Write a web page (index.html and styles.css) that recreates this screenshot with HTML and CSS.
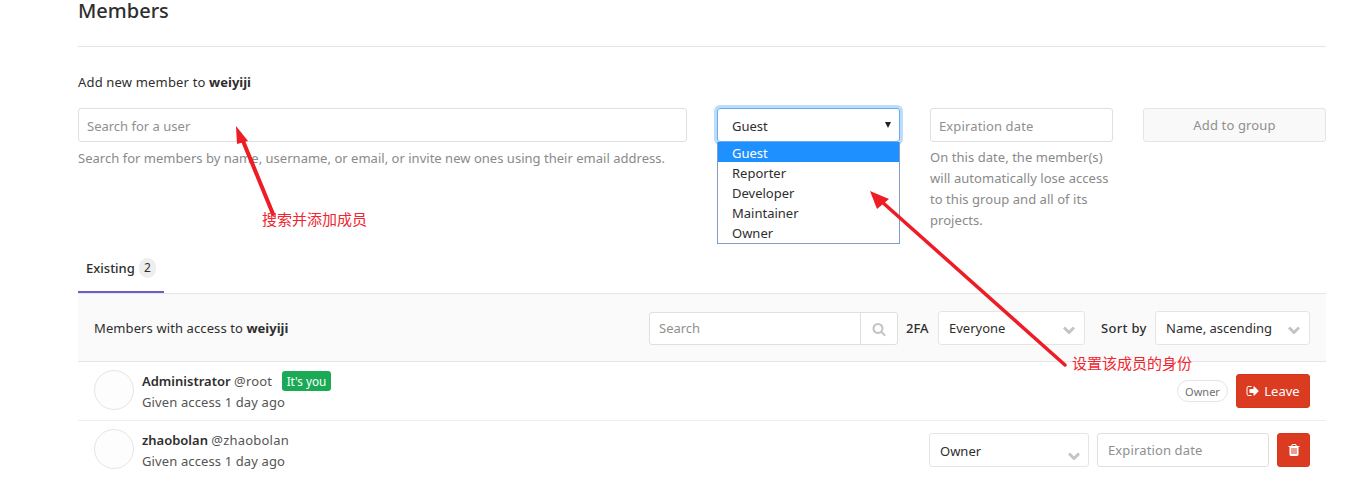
FILE: index.html
```html
<!DOCTYPE html>
<html lang="en">
<head>
  <meta charset="UTF-8">
  <title>Members</title>
  <link rel="stylesheet" href="styles.css">
</head>
<body>
  <div class="page">
    <h3 class="page-title">Members</h3>

    <p class="add-title">Add new member to <strong>weiyiji</strong></p>
    <div class="add-form">
      <div>
        <input class="input" type="text" placeholder="Search for a user">
        <p class="help">Search for members by name, username, or email, or invite new ones using their email address.</p>
      </div>
      <div class="role-col">
        <div class="role-select">Guest<span class="role-caret"></span></div>
        <ul class="role-menu">
          <li class="selected">Guest</li>
          <li>Reporter</li>
          <li>Developer</li>
          <li>Maintainer</li>
          <li>Owner</li>
        </ul>
      </div>
      <div>
        <input class="input input-date" type="text" placeholder="Expiration date">
        <p class="help help-date">On this date, the member(s) will automatically lose access to this group and all of its projects.</p>
      </div>
      <div>
        <button class="btn-add" type="button">Add to group</button>
      </div>
    </div>

    <div class="tabs">
      <a class="tab">Existing <span class="tab-count">2</span></a>
    </div>

    <div class="filter-bar">
      <div class="filter-title">Members with access to <strong>weiyiji</strong></div>
      <div class="filter-controls">
        <div class="search-box">
          <input class="search-input" type="text" placeholder="Search">
          <span class="search-btn">
            <svg viewBox="0 0 1792 1792" width="14" height="14"><path fill="#c4c4c4" d="M1216 832q0-185-131.500-316.500t-316.500-131.500-316.500 131.500-131.500 316.500 131.500 316.500 316.500 131.500 316.500-131.500 131.500-316.500zm512 832q0 52-38 90t-90 38q-54 0-90-38l-343-342q-179 124-399 124-143 0-273.500-55.500t-225-150-150-225-55.500-273.500 55.500-273.500 150-225 225-150 273.500-55.500 273.500 55.500 225 150 150 225 55.500 273.500q0 220-124 399l343 343q37 37 37 90z"/></svg>
          </span>
        </div>
        <label class="filter-label label-2fa">2FA</label>
        <div class="select select-2fa">Everyone
          <svg class="chevron" viewBox="0 0 12 8" width="12" height="8"><path d="M1 1.500l5 5 5-5" fill="none" stroke="#c4c4c4" stroke-width="3"/></svg>
        </div>
        <label class="filter-label label-sort">Sort by</label>
        <div class="select select-sort">Name, ascending
          <svg class="chevron" viewBox="0 0 12 8" width="12" height="8"><path d="M1 1.500l5 5 5-5" fill="none" stroke="#c4c4c4" stroke-width="3"/></svg>
        </div>
      </div>
    </div>

    <div class="member">
      <div class="avatar"></div>
      <div class="member-info">
        <div><span class="member-name">Administrator</span> <span class="member-user">@root</span> <span class="badge-you">It's you</span></div>
        <div class="member-access">Given access 1 day ago</div>
      </div>
      <div class="member-actions">
        <span class="badge-role">Owner</span>
        <button class="btn-danger btn-leave" type="button">
          <svg viewBox="0 0 1792 1792" width="14" height="14"><path fill="#fff" d="M704 1440q0 4 1 20t.5 26.500-3 23.500-10 19.500-20.500 6.500h-320q-119 0-203.500-84.500t-84.500-203.500v-704q0-119 84.500-203.500t203.500-84.500h320q13 0 22.500 9.500t9.500 22.500q0 4 1 20t.5 26.500-3 23.500-10 19.500-20.500 6.500h-320q-66 0-113 47t-47 113v704q0 66 47 113t113 47h312l11.500 1 11.500 3 8 5.500 7 9 2 13.500zm928-544q0 26-19 45l-544 544q-19 19-45 19t-45-19-19-45v-288h-448q-26 0-45-19t-19-45v-384q0-26 19-45t45-19h448v-288q0-26 19-45t45-19 45 19l544 544q19 19 19 45z"/></svg>
          Leave
        </button>
      </div>
    </div>

    <div class="member member-last">
      <div class="avatar"></div>
      <div class="member-info">
        <div><span class="member-name">zhaobolan</span> <span class="member-user">@zhaobolan</span></div>
        <div class="member-access">Given access 1 day ago</div>
      </div>
      <div class="member-actions">
        <div class="select select-owner">Owner
          <svg class="chevron chevron-low" viewBox="0 0 12 8" width="12" height="8"><path d="M1 1.500l5 5 5-5" fill="none" stroke="#c4c4c4" stroke-width="3"/></svg>
        </div>
        <input class="input input-date input-member-date" type="text" placeholder="Expiration date">
        <button class="btn-danger btn-trash" type="button">
          <svg viewBox="0 0 1792 1792" width="14" height="14"><path fill="#fff" d="M704 1376v-704q0-14-9-23t-23-9h-64q-14 0-23 9t-9 23v704q0 14 9 23t23 9h64q14 0 23-9t9-23zm256 0v-704q0-14-9-23t-23-9h-64q-14 0-23 9t-9 23v704q0 14 9 23t23 9h64q14 0 23-9t9-23zm256 0v-704q0-14-9-23t-23-9h-64q-14 0-23 9t-9 23v704q0 14 9 23t23 9h64q14 0 23-9t9-23zm-544-992h448l-48-117q-7-9-17-11h-317q-10 2-17 11zm928 32v64q0 14-9 23t-23 9h-96v948q0 83-47 143.500t-113 60.500h-832q-66 0-113-58.500t-47-141.500v-952h-96q-14 0-23-9t-9-23v-64q0-14 9-23t23-9h309l70-167q15-37 54-63t79-26h320q40 0 79 26t54 63l70 167h309q14 0 23 9t9 23z"/></svg>
        </button>
      </div>
    </div>
  </div>

  <!-- red screenshot annotations -->
  <svg class="arrows" width="1371" height="500" viewBox="0 0 1371 500">
    <path d="M273 214L243 141" stroke="#ee1c25" stroke-width="4" stroke-linecap="round" fill="none"/>
    <path d="M236 126L248 141L237 144z" fill="#ee1c25"/>
    <path d="M1065 365L881 201" stroke="#ee1c25" stroke-width="3.500" stroke-linecap="round" fill="none"/>
    <path d="M870 191L889 199L877 209z" fill="#ee1c25"/>
  </svg>
  <div class="note note-search">搜索并添加成员</div>
  <div class="note note-role">设置该成员的身份</div>
</body>
</html>
```

FILE: styles.css
```css
* {
  box-sizing: border-box;
}

html, body {
  height: 500px;
  overflow: hidden;
}

body {
  margin: 0;
  background-color: #fff;
  color: #2e2e2e;
  font-family: "Noto Sans", "Open Sans", sans-serif;
  font-size: 13px;
}

.page {
  width: 1248px;
  margin-left: 78px;
}

.page-title {
  margin: 0;
  height: 47px;
  border-bottom: 1px solid #e5e5e5;
  font-size: 20px;
  font-weight: 500;
  line-height: 22px;
  color: #2e2e2e;
}

.add-title {
  margin: 26px 0 16px;
  line-height: 19px;
  letter-spacing: .17px;
}

.add-title strong, .filter-title strong {
  letter-spacing: 0;
}

.add-form {
  display: grid;
  grid-template-columns: 609px 183px 183px 183px;
  column-gap: 30px;
  height: 152px;
}

.input {
  display: block;
  width: 100%;
  height: 34px;
  padding: 1px 8px 0;
  border: 1px solid #dfdfdf;
  border-radius: 3px;
  background: #fff;
  font-family: inherit;
  font-size: 13px;
  color: #2e2e2e;
}

.input-date {
  letter-spacing: .13px;
}

.input::placeholder, .search-input::placeholder {
  color: #8f8f8f;
  opacity: 1;
}

.help {
  margin: 6px 0 0;
  color: #8a8a8a;
  line-height: 21px;
  font-size: 13px;
  letter-spacing: .02px;
}

.help-date {
  margin-top: 5px;
  letter-spacing: .05px;
}

.role-col {
  position: relative;
}

.role-select {
  position: relative;
  height: 34px;
  padding: 0 14px;
  border: 1px solid #6aa9ef;
  border-radius: 3px;
  box-shadow: 0 0 0 3px #bcdcfb;
  line-height: 35px;
  color: #2e2e2e;
}

.role-caret {
  position: absolute;
  top: 13px;
  right: 8px;
  border-left: 3px solid transparent;
  border-right: 3px solid transparent;
  border-top: 6px solid #222;
}

.role-menu {
  position: absolute;
  top: 34px;
  left: 0;
  width: 183px;
  height: 102px;
  margin: 0;
  padding: 0;
  list-style: none;
  background: #fff;
  border: 1px solid #7f9bd0;
  border-top: 0;
  z-index: 2;
}

.role-menu li {
  height: 20px;
  padding: 1px 0 0 14px;
  line-height: 20px;
  color: #2e2e2e;
}

.role-menu li.selected {
  background-color: #1e90ff;
  color: #fff;
}

.btn-add {
  width: 100%;
  height: 34px;
  border: 1px solid #e5e5e5;
  border-radius: 3px;
  background: #f9f9f9;
  color: #8f8f8f;
  font-family: inherit;
  font-size: 13px;
  letter-spacing: .15px;
}

.tabs {
  display: flex;
  height: 33px;
}

.tab {
  display: flex;
  align-items: center;
  gap: 4px;
  width: 86px;
  height: 33px;
  padding: 0 8px 15px;
  border-bottom: 2px solid #6b5fc7;
  color: #2e2e2e;
  font-weight: 500;
}

.tab-count {
  width: 17px;
  height: 20px;
  border-radius: 10px;
  background: #eee;
  text-align: center;
  line-height: 20px;
  font-size: 12px;
  font-weight: 400;
  flex-shrink: 0;
}

.filter-bar {
  display: flex;
  justify-content: space-between;
  align-items: center;
  height: 69px;
  padding: 1px 16px 0;
  background: #fafafa;
  border-top: 1px solid #e5e5e5;
  border-bottom: 1px solid #e5e5e5;
}

.filter-title {
  letter-spacing: .1px;
}

.filter-controls {
  display: flex;
  align-items: center;
}

.search-box {
  display: flex;
  width: 249px;
  height: 33px;
  border: 1px solid #dfdfdf;
  border-radius: 3px;
  background: #fff;
}

.search-input {
  flex: 1;
  min-width: 0;
  padding: 0 9px;
  border: 0;
  border-right: 1px solid #dfdfdf;
  border-radius: 3px 0 0 3px;
  background: transparent;
  font-family: inherit;
  font-size: 13px;
}

.search-btn {
  display: flex;
  align-items: center;
  justify-content: center;
  width: 36px;
  padding-top: 2px;
}

.filter-label {
  font-weight: 500;
  color: #2e2e2e;
}

.label-2fa {
  width: 24px;
  margin: 0 8px;
}

.label-sort {
  width: 46px;
  margin: 0 8px 0 16px;
  letter-spacing: .3px;
  white-space: nowrap;
}

.select {
  position: relative;
  height: 34px;
  padding: 0 10px;
  border: 1px solid #e5e5e5;
  border-radius: 3px;
  background: #fff;
  line-height: 33px;
  color: #2e2e2e;
}

.select-2fa {
  width: 147px;
}

.select-sort {
  width: 155px;
}

.select-owner {
  width: 160px;
  line-height: 35px;
}

.chevron {
  position: absolute;
  top: 14px;
  right: 9px;
}

.chevron-low {
  top: 18px;
  right: 8px;
}

.member {
  display: flex;
  align-items: center;
  height: 59px;
  padding: 0 16px;
  border-bottom: 1px solid #eee;
}

.member-last {
  height: 57px;
  border-bottom: 0;
}

.avatar {
  width: 40px;
  height: 40px;
  margin: -2px 8px 0 0;
  border: 1px solid #e5e5e5;
  border-radius: 50%;
  background: #fdfdfd;
}

.member-info {
  flex: 1;
  padding-top: 2px;
  line-height: 21px;
}

.member-name {
  font-weight: 600;
  color: #2e2e2e;
}

.member-user {
  color: #555;
  letter-spacing: .2px;
}

.member-access {
  color: #555;
  letter-spacing: .12px;
}

.badge-you {
  display: inline-block;
  height: 20px;
  margin-left: 6px;
  padding: 0 5px;
  border-radius: 3px;
  background: #1aaa55;
  color: #fff;
  font-size: 11.700px;
  line-height: 20px;
}

.member-actions {
  display: flex;
  align-items: center;
  gap: 8px;
}

.badge-role {
  display: inline-block;
  width: 51px;
  height: 22px;
  border: 1px solid #e5e5e5;
  border-radius: 11px;
  text-align: center;
  color: #707070;
  font-size: 11px;
  line-height: 21px;
}

.btn-danger {
  display: flex;
  align-items: center;
  justify-content: center;
  height: 34px;
  border: 1px solid #d5361d;
  border-radius: 3px;
  background: #db3b21;
  color: #fff;
  font-family: inherit;
  font-size: 13px;
}

.btn-leave {
  gap: 4px;
  width: 74px;
  padding: 0;
}

.btn-trash {
  width: 33px;
  padding: 0;
}

.input-member-date {
  width: 172px;
  padding: 0 10px;
}

.arrows {
  position: absolute;
  top: 0;
  left: 0;
  z-index: 3;
  pointer-events: none;
}

.note {
  position: absolute;
  z-index: 4;
  color: #f0252f;
  font-family: "Noto Sans CJK SC", sans-serif;
  font-size: 15px;
  line-height: 20px;
}

.note-search {
  left: 262px;
  top: 209px;
}

.note-role {
  left: 1072px;
  top: 353px;
}
```
